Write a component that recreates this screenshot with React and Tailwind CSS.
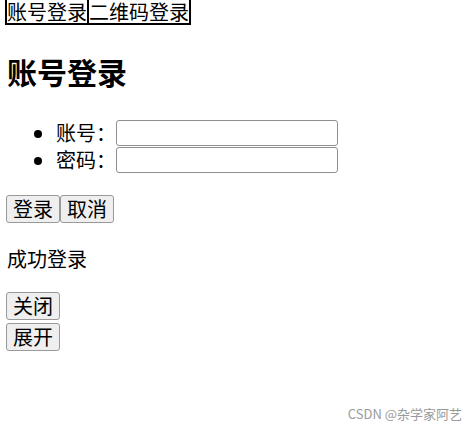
import React from "react";

const Btn = ({ children }) => (
  <button className="h-[28px] px-[6px] text-[20px] leading-[24px] bg-[#efefef] border border-[#999999] rounded-[3px] text-black">
    {children}
  </button>
);

export default function App() {
  return (
    <div className="relative w-[474px] h-[430px] bg-white text-black overflow-hidden font-['Microsoft_YaHei','Noto_Sans_CJK_SC',sans-serif]">
      {/* tabs, top edge is cut by the crop */}
      <div className="flex ml-[5px]">
        <span className="border-2 border-t-0 border-black text-[20px] leading-[23px]">账号登录</span>
        <span className="border-2 border-t-0 border-l-0 border-black text-[20px] leading-[23px]">二维码登录</span>
      </div>

      <h2 className="mt-[28px] ml-[7px] text-[30px] leading-[36px] font-bold">账号登录</h2>

      <ul className="mt-[30px] ml-[40px] list-disc pl-[16px] text-[20px]">
        <li className="h-[27px] leading-[27px]">
          <div className="flex items-center">
            <span>账号：</span>
            <input className="w-[222px] h-[26px] border border-[#8f8f8f] rounded-[3px] outline-none" />
          </div>
        </li>
        <li className="h-[27px] leading-[27px]">
          <div className="flex items-center">
            <span>密码：</span>
            <input className="w-[222px] h-[26px] border border-[#8f8f8f] rounded-[3px] outline-none" />
          </div>
        </li>
      </ul>

      <div className="flex mt-[22px] ml-[6px]">
        <Btn>登录</Btn>
        <Btn>取消</Btn>
      </div>

      <p className="mt-[24px] ml-[7px] text-[20px] leading-[24px]">成功登录</p>

      <div className="flex flex-col items-start mt-[21px] ml-[6px] gap-[3px]">
        <Btn>关闭</Btn>
        <Btn>展开</Btn>
      </div>

      <div className="absolute right-[12px] bottom-[8px] text-[13px] leading-[16px] text-[#9a9a9a]">
        CSDN @杂学家阿艺
      </div>
    </div>
  );
}
